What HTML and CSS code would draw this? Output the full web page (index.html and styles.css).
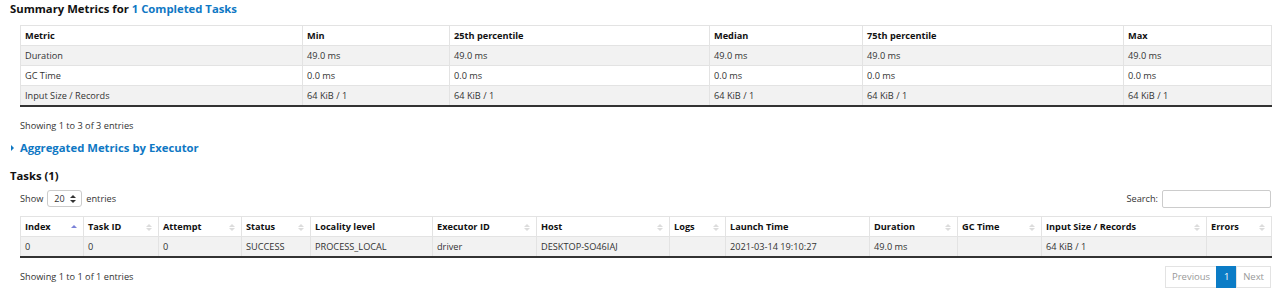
FILE: index.html
```html
<!DOCTYPE html>
<html lang="en">
<head>
    <meta charset="UTF-8">
    <title>Stage details</title>
    <link rel="stylesheet" href="styles.css">
</head>
<body>
    <h4 class="title">Summary Metrics for <a href="#">1 Completed Tasks</a></h4>
    <div class="wrap">
        <table class="grid summary">
            <colgroup>
                <col class="s1"><col class="s2"><col class="s3"><col class="s4"><col class="s5"><col class="s6">
            </colgroup>
            <thead>
                <tr><th>Metric</th><th>Min</th><th>25th percentile</th><th>Median</th><th>75th percentile</th><th>Max</th></tr>
            </thead>
            <tbody>
                <tr><td>Duration</td><td>49.0 ms</td><td>49.0 ms</td><td>49.0 ms</td><td>49.0 ms</td><td>49.0 ms</td></tr>
                <tr><td>GC Time</td><td>0.0 ms</td><td>0.0 ms</td><td>0.0 ms</td><td>0.0 ms</td><td>0.0 ms</td></tr>
                <tr><td>Input Size / Records</td><td>64 KiB / 1</td><td>64 KiB / 1</td><td>64 KiB / 1</td><td>64 KiB / 1</td><td>64 KiB / 1</td></tr>
            </tbody>
        </table>
        <div class="info first">Showing 1 to 3 of 3 entries</div>
    </div>

    <h4 class="collapse"><span class="arrow"></span><a href="#">Aggregated Metrics by Executor</a></h4>

    <h4 class="tasks-title">Tasks (1)</h4>
    <div class="wrap">
        <div class="controls">
            <label class="length">Show
                <span class="select">20 <span class="updown"></span></span>
                entries</label>
            <label class="search">Search: <span class="search-box"></span></label>
        </div>
        <table class="grid tasks">
            <colgroup>
                <col class="t1"><col class="t2"><col class="t3"><col class="t4"><col class="t5"><col class="t6"><col class="t7">
                <col class="t8"><col class="t9"><col class="t10"><col class="t11"><col class="t12"><col class="t13">
            </colgroup>
            <thead>
                <tr>
                    <th class="sort asc">Index</th>
                    <th class="sort">Task ID</th>
                    <th class="sort">Attempt</th>
                    <th class="sort">Status</th>
                    <th>Locality level</th>
                    <th class="sort">Executor ID</th>
                    <th class="sort">Host</th>
                    <th class="sort">Logs</th>
                    <th>Launch Time</th>
                    <th class="sort">Duration</th>
                    <th class="sort">GC Time</th>
                    <th class="sort">Input Size / Records</th>
                    <th class="sort">Errors</th>
                </tr>
            </thead>
            <tbody>
                <tr>
                    <td>0</td><td>0</td><td>0</td><td>SUCCESS</td><td>PROCESS_LOCAL</td><td>driver</td>
                    <td>DESKTOP-SO46IAJ</td><td></td><td>2021-03-14 19:10:27</td><td>49.0 ms</td><td></td>
                    <td>64 KiB / 1</td><td></td>
                </tr>
            </tbody>
        </table>
        <div class="footer">
            <div class="info">Showing 1 to 1 of 1 entries</div>
            <div class="pager">
                <a href="#" class="off">Previous</a>
                <a href="#" class="current">1</a>
                <a href="#" class="off">Next</a>
            </div>
        </div>
    </div>
</body>
</html>
```

FILE: styles.css
```css
body {
    margin: 0;
    padding: 1px 9px 0 10px;
    font-family: "Open Sans", "Noto Sans", sans-serif;
    font-size: 9.2px;
    color: #333;
    background: #fff;
}
a {
    color: #0f78c4;
    text-decoration: none;
}
h4 {
    margin: 0;
    font-size: 11.3px;
    font-weight: 700;
    color: #111;
    line-height: 16px;
}
.title {
    margin-bottom: 8px;
}
.wrap {
    margin-left: 10px;
}
.grid {
    width: 1251px;
    border-collapse: collapse;
    table-layout: fixed;
}
.grid th,
.grid td {
    border: 1px solid #e3e3e3;
    padding: 2px 4px;
    line-height: 15px;
    text-align: left;
    white-space: nowrap;
    overflow: hidden;
}
.grid th {
    font-weight: 700;
    color: #111;
    background: #fff;
}
.grid tbody tr:nth-child(odd) td {
    background: #f2f2f2;
}
.grid tbody tr:last-child td {
    border-bottom: 2px solid #333;
}
.s1 { width: 282px; }
.s2 { width: 147px; }
.s3 { width: 260px; }
.s4 { width: 153px; }
.s5 { width: 261px; }
.s6 { width: 148px; }

.t1 { width: 63px; }
.t2 { width: 75px; }
.t3 { width: 83px; }
.t4 { width: 69px; }
.t5 { width: 122px; }
.t6 { width: 104px; }
.t7 { width: 133px; }
.t8 { width: 56px; }
.t9 { width: 144px; }
.t10 { width: 88px; }
.t11 { width: 84px; }
.t12 { width: 165px; }
.t13 { width: 65px; }

/* sort arrows */
.grid th.sort {
    position: relative;
    padding-right: 14px;
}
.grid th.sort::before,
.grid th.sort::after {
    content: "";
    position: absolute;
    right: 6px;
    border-left: 3px solid transparent;
    border-right: 3px solid transparent;
}
.grid th.sort::before {
    top: 7px;
    border-bottom: 3px solid #dcdcdc;
}
.grid th.sort::after {
    top: 11px;
    border-top: 3px solid #dcdcdc;
}
.grid th.asc::before {
    top: 8px;
    border-bottom-color: #7b82d8;
}
.grid th.asc::after {
    display: none;
}

.info {
    line-height: 14px;
    color: #333;
}
.info.first {
    margin-top: 12px;
    margin-bottom: 7px;
}
.collapse {
    display: flex;
    align-items: center;
    height: 16px;
}
.collapse .arrow {
    width: 0;
    height: 0;
    border-top: 3px solid transparent;
    border-bottom: 3px solid transparent;
    border-left: 3px solid #0f78c4;
    margin: 0 6px 0 1px;
}
.tasks-title {
    margin-top: 12px;
}
.controls {
    display: flex;
    justify-content: space-between;
    align-items: center;
    margin-top: 6px;
    margin-bottom: 9px;
    height: 17px;
}
.length,
.search {
    display: flex;
    align-items: center;
    gap: 4px;
}
.select {
    display: inline-flex;
    align-items: center;
    justify-content: space-between;
    box-sizing: border-box;
    width: 35px;
    height: 17px;
    padding: 0 5px 0 6px;
    border: 1px solid #ccc;
    border-radius: 3px;
    font-size: 9px;
}
.updown {
    position: relative;
    width: 6px;
    height: 8px;
}
.updown::before,
.updown::after {
    content: "";
    position: absolute;
    left: 0;
    border-left: 3px solid transparent;
    border-right: 3px solid transparent;
}
.updown::before {
    top: 0;
    border-bottom: 3px solid #333;
}
.updown::after {
    bottom: 0;
    border-top: 3px solid #333;
}
.search-box {
    display: inline-block;
    box-sizing: border-box;
    width: 109px;
    height: 18px;
    border: 1px solid #ccc;
    border-radius: 2px;
}
.footer {
    display: flex;
    justify-content: space-between;
    align-items: center;
    margin-top: 8px;
}
.pager {
    display: flex;
}
.pager a {
    box-sizing: border-box;
    height: 22px;
    line-height: 20px;
    padding: 0 6px;
    border: 1px solid #e3e3e3;
    color: #999;
    font-size: 9.5px;
}
.pager a + a {
    margin-left: -1px;
}
.pager a.current {
    background: #0b7cc6;
    border-color: #0b7cc6;
    color: #fff;
    width: 21px;
    padding: 0;
    text-align: center;
}
```
